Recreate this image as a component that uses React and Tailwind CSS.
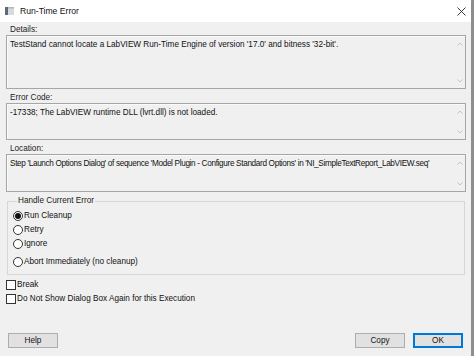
import React from "react";

function ScrollCol() {
  return (
    <div className="flex flex-col justify-between items-center w-[10px] pt-[6px] pb-[5px] shrink-0">
      <svg width="6" height="4" viewBox="0 0 6 4">
        <path d="M0.5 3.5 L3 1 L5.5 3.5" fill="none" stroke="#c4c4c4" strokeWidth="1" />
      </svg>
      <svg width="6" height="4" viewBox="0 0 6 4">
        <path d="M0.5 0.5 L3 3 L5.5 0.5" fill="none" stroke="#c4c4c4" strokeWidth="1" />
      </svg>
    </div>
  );
}

function Field({ label, text, h, labelMt, textCls = "" }) {
  return (
    <div className="flex flex-col">
      <div className={`${labelMt} leading-[10px] pl-[4px] text-[#222]`}>{label}</div>
      <div className={`${h} flex border border-[#a6a6a6] bg-[#f0f0f0] shadow-[inset_1px_1px_0_#fafafa]`}>
        <div className={`flex-1 pl-[3px] pt-[4px] leading-[10px] text-[#111] whitespace-nowrap overflow-hidden ${textCls}`}>{text}</div>
        <ScrollCol />
      </div>
    </div>
  );
}

function Radio({ checked, label, extra = "" }) {
  return (
    <div className={`flex items-center h-[14px] ${extra}`}>
      <div className="w-[10px] h-[10px] rounded-full border border-[#333] bg-white flex items-center justify-center shrink-0">
        {checked && <div className="w-[6px] h-[6px] rounded-full bg-[#111]" />}
      </div>
      <span className="ml-[1px] leading-[10px] text-[#111]">{label}</span>
    </div>
  );
}

function Check({ label }) {
  return (
    <div className="flex items-center h-[14px]">
      <div className="w-[10px] h-[10px] border border-[#333] bg-white shrink-0" />
      <span className="ml-[1px] leading-[10px] text-[#111]">{label}</span>
    </div>
  );
}

export default function App() {
  return (
    <div className="w-[474px] h-[356px] bg-[#f0f0f0] border-r-[3px] border-[#8e8e8e] flex flex-col font-['Liberation_Sans',Arial,sans-serif] text-[8.2px] overflow-hidden">
      <div className="h-[22px] bg-white flex items-center shrink-0">
        <svg className="ml-[5px]" width="9" height="8" viewBox="0 0 9 8">
          <rect x="0" y="0" width="9" height="8" fill="#d9d9d9" />
          <rect x="0" y="0" width="3" height="8" fill="#5a6a7a" />
          <rect x="3" y="0" width="6" height="1.5" fill="#b0b8c0" />
        </svg>
        <span className="ml-[6px] text-[8.6px] text-[#111]">Run-Time Error</span>
        <svg className="ml-auto mr-[5px]" width="9" height="9" viewBox="0 0 9 9">
          <path d="M0.5 0.5 L8.5 8.5 M8.5 0.5 L0.5 8.5" stroke="#222" strokeWidth="0.9" />
        </svg>
      </div>
      <div className="flex-1 flex flex-col pl-[6px] pr-[5px]">
        <Field
          labelMt="mt-[3px]"
          h="h-[54px]"
          label="Details:"
          text="TestStand cannot locate a LabVIEW Run-Time Engine of version '17.0' and bitness '32-bit'."
        />
        <Field
          labelMt="mt-[4px]"
          h="h-[37px]"
          label="Error Code:"
          text="-17338; The LabVIEW runtime DLL (lvrt.dll) is not loaded."
        />
        <Field
          labelMt="mt-[4px]"
          h="h-[38px]"
          label="Location:"
          textCls="tracking-[-0.33px]"
          text="Step 'Launch Options Dialog' of sequence 'Model Plugin - Configure Standard Options' in 'NI_SimpleTextReport_LabVIEW.seq'"
        />
        <fieldset className="mt-[4px] ml-[1px] mr-[1px] border border-[#d6d6d6] pl-[5px] pb-[5px]">
          <legend className="ml-[4px] px-[1px] leading-[10px] text-[#222]">Handle Current Error</legend>
          <div className="flex flex-col pt-[3px]">
            <Radio checked label="Run Cleanup" />
            <Radio label="Retry" />
            <Radio label="Ignore" />
            <Radio label="Abort Immediately (no cleanup)" extra="mt-[4px]" />
          </div>
        </fieldset>
        <div className="flex flex-col mt-[3px]">
          <Check label="Break" />
          <Check label="Do Not Show Dialog Box Again for this Execution" />
        </div>
        <div className="mt-auto mb-[8px] flex items-center pl-[2px] pr-[3px]">
          <button className="w-[50px] h-[15px] bg-[#e1e1e1] border border-[#adadad] text-[#111] leading-[10px]">Help</button>
          <button className="ml-auto w-[50px] h-[15px] bg-[#e1e1e1] border border-[#adadad] text-[#111] leading-[10px]">Copy</button>
          <button className="ml-[8px] w-[50px] h-[15px] bg-[#e1e1e1] border border-[#0078d7] shadow-[inset_0_0_0_1px_#0078d7] text-[#111] leading-[10px]">OK</button>
        </div>
      </div>
    </div>
  );
}
